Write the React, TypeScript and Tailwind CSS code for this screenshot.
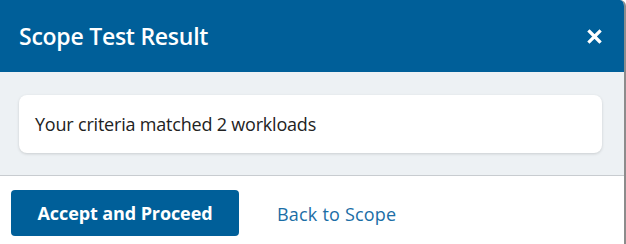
import React from "react";

export default function App() {
  return (
    <div className="w-[626px] h-[244px] bg-white overflow-hidden" style={{ fontFamily: '"Open Sans", "Noto Sans", sans-serif' }}>
      <div className="w-[626px] h-[244px] flex flex-col border-r-2 border-[#8c8c8c] rounded-tr-[6px] overflow-hidden">
        <div className="h-[72px] bg-[#005f99] flex items-center justify-between pl-[19px] pr-[22px]">
          <h1 className="text-white text-[23px] font-semibold tracking-[-0.25px] leading-none">Scope Test Result</h1>
          <svg width="15" height="15" viewBox="0 0 15 15">
            <path d="M2.5 2.5 L12.5 12.5 M12.5 2.5 L2.5 12.5" stroke="white" strokeWidth="3.2" strokeLinecap="square" />
          </svg>
        </div>
        <div className="h-[104px] bg-[#edf1f4] border-b border-[#c8ccd0] px-[19px] pt-[23px]">
          <div className="h-[58px] w-[583px] bg-white rounded-[8px] shadow-[0_1px_3px_rgba(0,0,0,0.15)] flex items-center pl-[16px]">
            <span className="text-[18px] text-[#222] tracking-[-0.2px]">Your criteria matched 2 workloads</span>
          </div>
        </div>
        <div className="flex-1 flex items-start pt-[14px] pl-[11px]">
          <button className="h-[46px] w-[228px] rounded-[4px] bg-[#005f99] text-white text-[18px] font-bold tracking-[-0.1px]">Accept and Proceed</button>
          <span className="ml-[38px] mt-[11px] text-[18px] text-[#1b6ea6] tracking-[0.2px]">Back to Scope</span>
        </div>
      </div>
    </div>
  );
}
